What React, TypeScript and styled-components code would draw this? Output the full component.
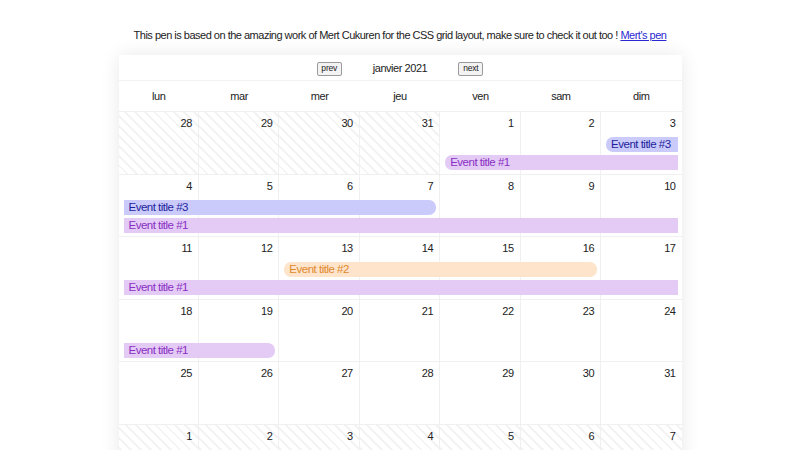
import * as React from "react";
import styled, { createGlobalStyle, css } from "styled-components";

const GlobalStyle = createGlobalStyle`
  html, body {
    margin: 0;
    padding: 0;
    background: #ffffff;
    font-family: "Liberation Sans", Arial, sans-serif;
    letter-spacing: -0.45px;
    color: #222;
  }
`;

const Page = styled.div`
  display: flex;
  flex-direction: column;
  align-items: center;
  padding-top: 29px;
  height: 450px;
  overflow: hidden;
  box-sizing: border-box;
`;

const Intro = styled.p`
  margin: 0 0 13px;
  font-size: 11px;
  line-height: 13px;
  letter-spacing: -0.5px;
  color: #222;

  a {
    color: #2a2ad0;
  }
`;

const Calendar = styled.div`
  width: 563px;
  background: #fff;
  box-shadow: 0 0 18px rgba(0, 0, 0, 0.09);
`;

const Header = styled.div`
  display: flex;
  justify-content: center;
  align-items: center;
  gap: 31px;
  height: 26px;
  box-sizing: border-box;
  border-bottom: 1px solid #f2f2f2;
  font-size: 11px;
`;

const NavButton = styled.button`
  font-family: "Liberation Sans", Arial, sans-serif;
  font-size: 8.5px;
  letter-spacing: -0.2px;
  line-height: 11px;
  padding: 0;
  height: 14px;
  width: 25px;
  background: #f3f3f3;
  border: 1px solid #9a9a9a;
  border-radius: 2px;
  color: #222;
  margin-top: 2px;
`;

const DayNames = styled.div`
  display: grid;
  grid-template-columns: repeat(7, 1fr);
  height: 31px;
  border-bottom: 1px solid #f0f0f0;
  box-sizing: border-box;
`;

const DayName = styled.div`
  display: flex;
  align-items: center;
  justify-content: center;
  font-size: 11px;
  color: #222;
`;

const Week = styled.div`
  display: grid;
  grid-template-columns: repeat(7, 1fr);
  grid-template-rows: 25px 18px 18px 1fr;
  height: 62.5px;
`;

const Day = styled.div<{ $col: number; $disabled?: boolean }>`
  grid-column: ${(p) => p.$col};
  grid-row: 1 / -1;
  border-right: ${(p) => (p.$col < 7 ? "1px solid #f0f0f0" : "none")};
  border-bottom: 1px solid #f0f0f0;
  text-align: right;
  padding: 5px 6px 0 0;
  font-size: 11px;
  line-height: 13px;
  color: #222;
  ${(p) =>
    p.$disabled &&
    css`
      background-image: repeating-linear-gradient(
        45deg,
        #ffffff 0px,
        #ffffff 5px,
        #f3f3f3 5px,
        #f3f3f3 7px
      );
    `}
`;

type Tone = "purple" | "blue" | "orange";

const tones: Record<Tone, { bg: string; fg: string }> = {
  purple: { bg: "#e3cbf5", fg: "#8a2ec4" },
  blue: { bg: "#cacbfa", fg: "#1e1e9c" },
  orange: { bg: "#fde4cb", fg: "#e0892b" },
};

const Event = styled.div<{
  $tone: Tone;
  $from: number;
  $to: number;
  $row: number;
  $roundLeft?: boolean;
  $roundRight?: boolean;
}>`
  grid-column: ${(p) => `${p.$from} / ${p.$to + 1}`};
  grid-row: ${(p) => p.$row + 1};
  margin: 0 4px 0 5px;
  height: 15px;
  padding-left: 5px;
  font-size: 11.5px;
  letter-spacing: -0.5px;
  line-height: 15px;
  white-space: nowrap;
  overflow: hidden;
  background: ${(p) => tones[p.$tone].bg};
  color: ${(p) => tones[p.$tone].fg};
  border-radius: ${(p) =>
    `${p.$roundLeft ? 7 : 0}px ${p.$roundRight ? 7 : 0}px ${
      p.$roundRight ? 7 : 0
    }px ${p.$roundLeft ? 7 : 0}px`};
  z-index: 1;
`;

type EventData = {
  title: string;
  tone: Tone;
  from: number;
  to: number;
  row: number;
  roundLeft?: boolean;
  roundRight?: boolean;
};

type WeekData = {
  days: { n: number; disabled?: boolean }[];
  events: EventData[];
};

const range = (a: number, b: number, disabled?: boolean) =>
  Array.from({ length: b - a + 1 }, (_, i) => ({ n: a + i, disabled }));

const weeks: WeekData[] = [
  {
    days: [...range(28, 31, true), ...range(1, 3)],
    events: [
      { title: "Event title #3", tone: "blue", from: 7, to: 7, row: 1, roundLeft: true },
      { title: "Event title #1", tone: "purple", from: 5, to: 7, row: 2, roundLeft: true },
    ],
  },
  {
    days: range(4, 10),
    events: [
      { title: "Event title #3", tone: "blue", from: 1, to: 4, row: 1, roundRight: true },
      { title: "Event title #1", tone: "purple", from: 1, to: 7, row: 2 },
    ],
  },
  {
    days: range(11, 17),
    events: [
      { title: "Event title #2", tone: "orange", from: 3, to: 6, row: 1, roundLeft: true, roundRight: true },
      { title: "Event title #1", tone: "purple", from: 1, to: 7, row: 2 },
    ],
  },
  {
    days: range(18, 24),
    events: [
      { title: "Event title #1", tone: "purple", from: 1, to: 2, row: 2, roundRight: true },
    ],
  },
  { days: range(25, 31), events: [] },
  { days: range(1, 7, true), events: [] },
];

const dayNames = ["lun", "mar", "mer", "jeu", "ven", "sam", "dim"];

export default function App() {
  return (
    <>
      <GlobalStyle />
      <Page>
        <Intro>
          This pen is based on the amazing work of Mert Cukuren for the CSS grid
          layout, make sure to check it out too ! <a href="#">Mert's pen</a>
        </Intro>
        <Calendar>
          <Header>
            <NavButton>prev</NavButton>
            <span>janvier 2021</span>
            <NavButton>next</NavButton>
          </Header>
          <DayNames>
            {dayNames.map((d) => (
              <DayName key={d}>{d}</DayName>
            ))}
          </DayNames>
          {weeks.map((w, wi) => (
            <Week key={wi}>
              {w.days.map((d, i) => (
                <Day key={i} $col={i + 1} $disabled={d.disabled}>
                  {d.n}
                </Day>
              ))}
              {w.events.map((e, ei) => (
                <Event
                  key={ei}
                  $tone={e.tone}
                  $from={e.from}
                  $to={e.to}
                  $row={e.row}
                  $roundLeft={e.roundLeft}
                  $roundRight={e.roundRight}
                >
                  {e.title}
                </Event>
              ))}
            </Week>
          ))}
        </Calendar>
      </Page>
    </>
  );
}
